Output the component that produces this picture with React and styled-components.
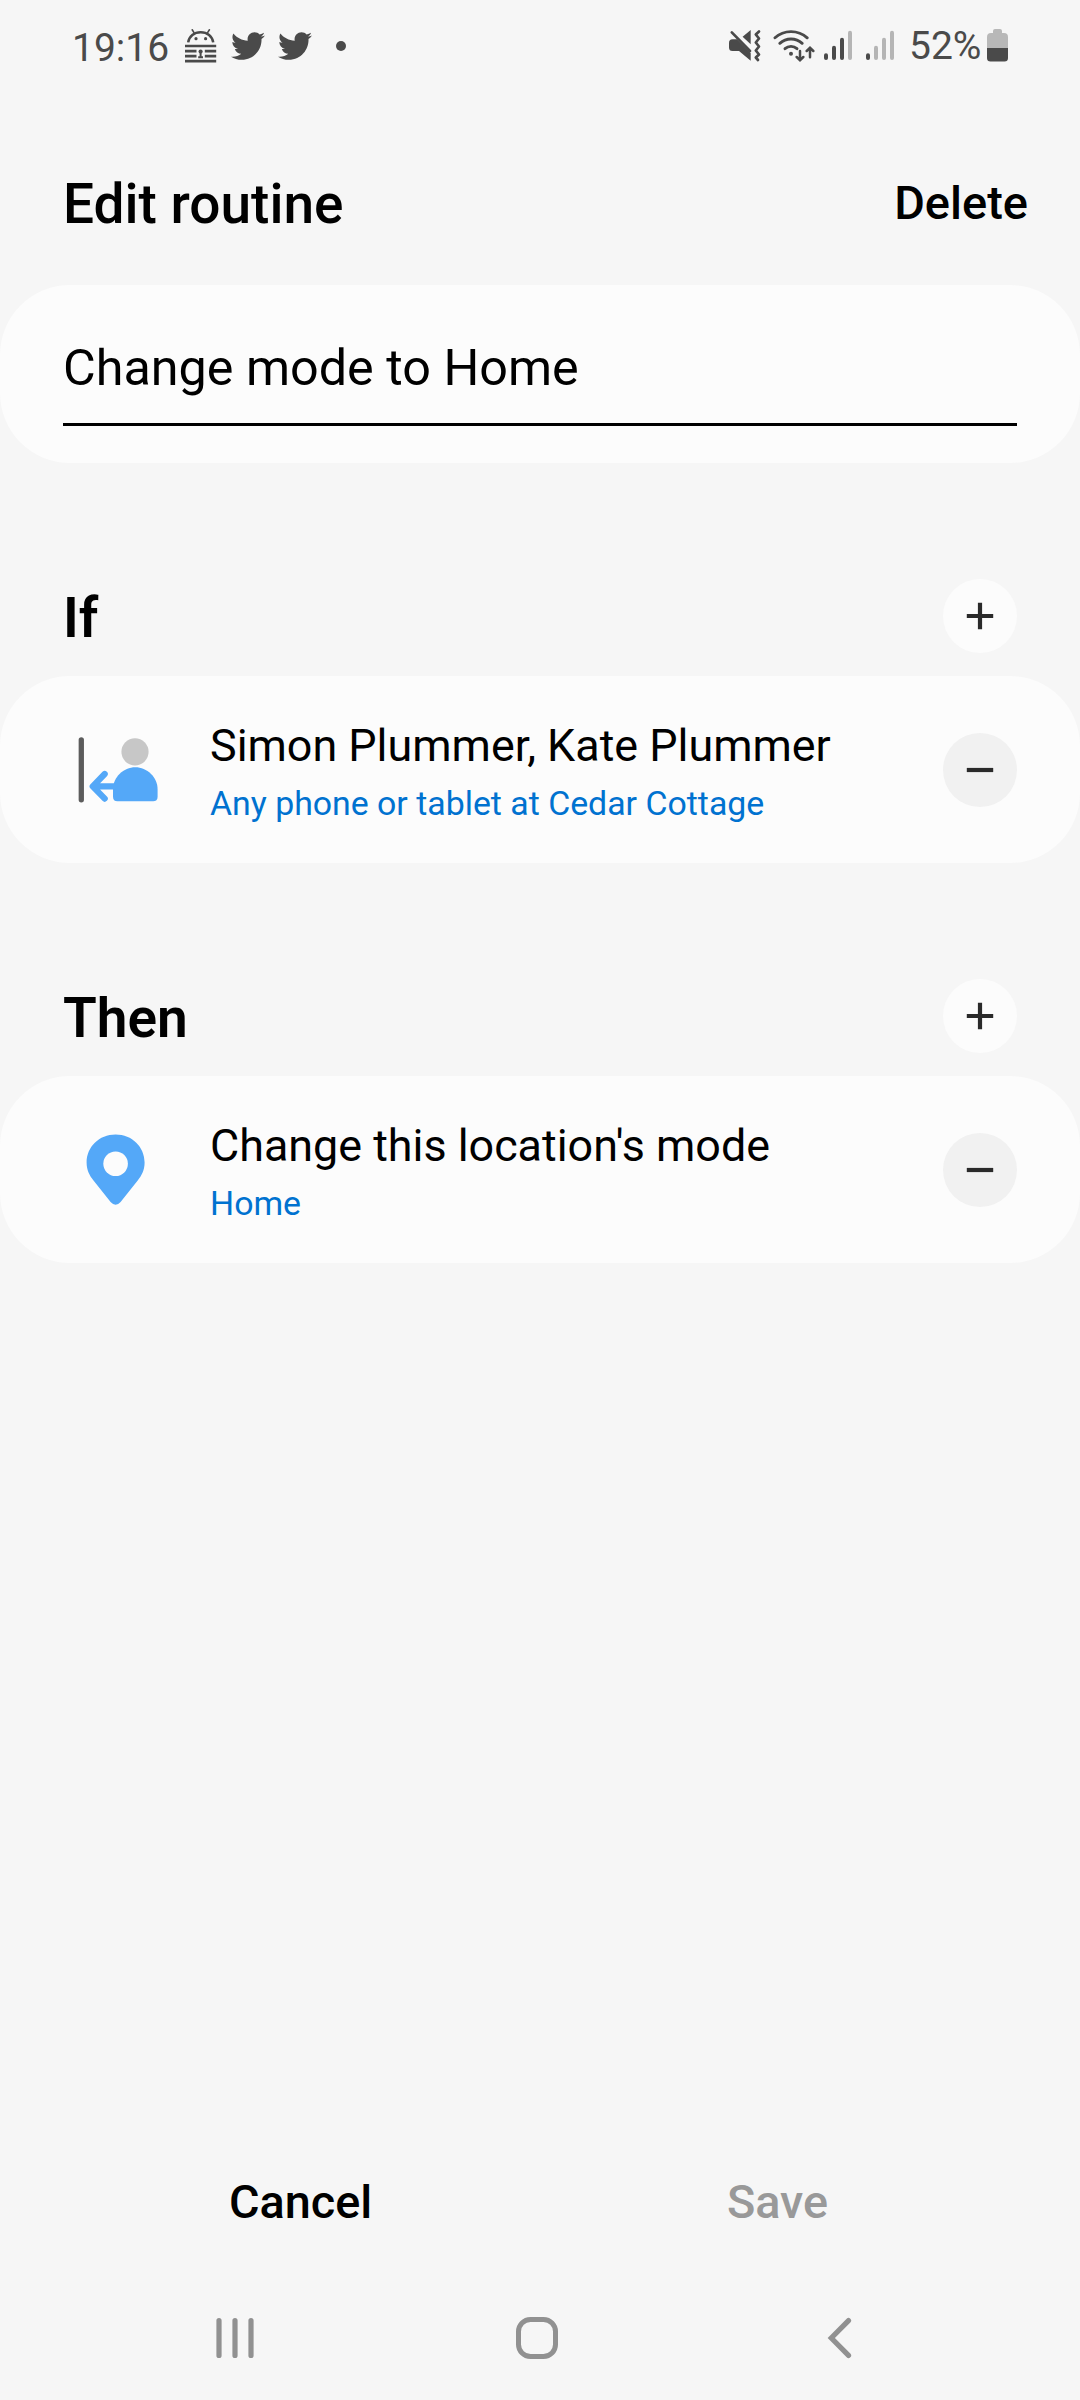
import styled, { createGlobalStyle } from 'styled-components'
import { FaTwitter } from 'react-icons/fa'

const conditions = [
    {
        title: 'Simon Plummer, Kate Plummer',
        sub: 'Any phone or tablet at Cedar Cottage',
        icon: ArriveIcon,
    },
]

const actions = [
    {
        title: "Change this location's mode",
        sub: 'Home',
        icon: PinIcon,
    },
]

function App() {
    return (
        <Screen>
            <GlobalStyle />
            <StatusBar />
            <Header>
                <Title>Edit routine</Title>
                <DeleteButton>Delete</DeleteButton>
            </Header>
            <NameCard>
                <NameField>Change mode to Home</NameField>
            </NameCard>
            <Section title="If" items={conditions} />
            <Section title="Then" items={actions} />
            <Footer>
                <FooterButton>Cancel</FooterButton>
                <FooterButton disabled>Save</FooterButton>
            </Footer>
            <NavBar />
        </Screen>
    )
}

export default App

function Section({ title, items }) {
    return (
        <SectionWrap>
            <SectionHead>
                <SectionTitle>{title}</SectionTitle>
                <RoundButton aria-label="Add">
                    <svg width="28" height="28" viewBox="0 0 28 28">
                        <path d="M.8 14H27.2M14 .8V27.2" stroke="#2a2a2a" strokeWidth="4.2" />
                    </svg>
                </RoundButton>
            </SectionHead>
            {items.map((item) => (
                <Card key={item.title}>
                    <IconBox><item.icon /></IconBox>
                    <CardText>
                        <CardTitle>{item.title}</CardTitle>
                        <CardSub>{item.sub}</CardSub>
                    </CardText>
                    <RoundButton $grey aria-label="Remove">
                        <svg width="28" height="28" viewBox="0 0 28 28">
                            <path d="M.8 14H27.2" stroke="#2a2a2a" strokeWidth="4.2" />
                        </svg>
                    </RoundButton>
                </Card>
            ))}
        </SectionWrap>
    )
}

function StatusBar() {
    return (
        <StatusWrap>
            <Clock>19:16</Clock>
            <LeftIcons>
                <KeepassIcon />
                <FaTwitter size="34" />
                <FaTwitter size="34" />
                <Dot />
            </LeftIcons>
            <RightIcons>
                <MuteIcon />
                <WifiIcon />
                <SignalIcon level={3} />
                <SignalIcon level={1} />
            </RightIcons>
            <Percent>52%</Percent>
            <Battery>
                <BatteryIcon />
            </Battery>
        </StatusWrap>
    )
}

function NavBar() {
    return (
        <NavWrap>
            <svg width="38" height="42" viewBox="0 0 38 42">
                <path d="M3 3.5V38.5M19 3.5V38.5M35 3.5V38.5" stroke="#919191" strokeWidth="5.2" strokeLinecap="round" />
            </svg>
            <svg width="42" height="42" viewBox="0 0 42 42">
                <rect x="2.5" y="2.5" width="37" height="37" rx="12" fill="none" stroke="#919191" strokeWidth="5" />
            </svg>
            <svg width="26" height="42" viewBox="0 0 26 42">
                <path d="M22.5 3.6L5.3 21L22.5 38.4" fill="none" stroke="#919191" strokeWidth="5.2" strokeLinecap="round" />
            </svg>
        </NavWrap>
    )
}

function KeepassIcon() {
    return (
        <svg width="32" height="34" viewBox="0 0 32 34">
            <path d="M3.2 13.4C4 7 9.2 3.2 15.7 3.2S27.4 7 28.2 13.4" fill="none" stroke="#4a4a4a" strokeWidth="2.5" />
            <path d="M9 3.6L7.2 .8M22.6 3.6L24.4 .8" stroke="#4a4a4a" strokeWidth="1.6" strokeLinecap="round" />
            <circle cx="11" cy="9.7" r="1.6" fill="#4a4a4a" />
            <circle cx="20.6" cy="9.7" r="1.6" fill="#4a4a4a" />
            <path d="M0 17H31.2M0 32.2H31.2M0 22.2H11.5M19.8 22.2H31.2M0 27.2H11.5M19.8 27.2H31.2" stroke="#4a4a4a" strokeWidth="2.7" />
            <circle cx="15.6" cy="22.5" r="2.1" fill="#4a4a4a" />
            <path d="M15.6 22V28.4M13.2 28.3H18" stroke="#4a4a4a" strokeWidth="2" />
        </svg>
    )
}

function MuteIcon() {
    return (
        <svg width="36" height="34" viewBox="0 0 36 34">
            <path d="M1 14Q1 10.3 4.5 10.3H9L22.7 24V31.7L11 22H4.5Q1 22 1 18.5Z" fill="#4a4a4a" />
            <path d="M22.7 1V15.3L14.6 7.7Z" fill="#4a4a4a" />
            <path d="M3.8 3.4L22 22" stroke="#4a4a4a" strokeWidth="2.7" strokeLinecap="round" />
            <path d="M31 2.5L27.8 5.5L31 9.5L27.8 13.5L31 17.5L27.8 21.5L31 25.5L27.8 28.5L30 31" fill="none" stroke="#4a4a4a" strokeWidth="2.7" strokeLinejoin="round" strokeLinecap="round" />
        </svg>
    )
}

function WifiIcon() {
    return (
        <svg width="42" height="34" viewBox="0 0 42 34">
            <g fill="none" stroke="#4a4a4a" strokeWidth="2.9" strokeLinecap="round">
                <path d="M2 8.8Q8.7 2.6 18 2.6T34.2 8.8" />
                <path d="M6.8 14.3Q11.6 10 18 10T29.2 14.3" />
                <path d="M12 19.7Q14.6 17.4 18 17.4T24 19.7" />
                <path d="M27 22V31M23.7 28L27 31.3L30.3 28M37 28.2V19M33.7 22L37 18.7L40.3 22" strokeWidth="2.5" />
            </g>
            <circle cx="18" cy="24.8" r="2" fill="#4a4a4a" />
        </svg>
    )
}

function SignalIcon({ level }) {
    const tops = [26.3, 18.7, 10.7, 3.7]
    return (
        <svg width="33" height="34" viewBox="0 0 33 34">
            {tops.map((top, i) => (
                <path key={top} d={`M${2 + i * 8} ${top}V29`} stroke={i < level ? '#4a4a4a' : '#b5b5b5'} strokeWidth="4" strokeLinecap="round" />
            ))}
        </svg>
    )
}

function BatteryIcon() {
    return (
        <svg width="21" height="33" viewBox="0 0 21 33">
            <path d="M0 19V8Q0 4 4 4H6V2Q6 0 8 0H13Q15 0 15 2V4H17Q21 4 21 8V19Z" fill="#b8b8b8" />
            <path d="M0 19H21V29Q21 32.5 17.5 32.5H3.5Q0 32.5 0 29Z" fill="#4a4a4a" />
        </svg>
    )
}

// person walking towards the door line
function ArriveIcon() {
    return (
        <svg width="84" height="70" viewBox="-2 .7 84 70">
            <path d="M5.3 5.5V65.5" stroke="#5c5c5c" strokeWidth="5.3" strokeLinecap="round" />
            <circle cx="59" cy="17.5" r="13.6" fill="#c7c7c7" />
            <path d="M37 55V62.5Q37 67 41.5 67H77Q81.6 67 81.6 62.5V55C81.6 43 71 33 59.3 33S37 43 37 55Z" fill="#54a8f8" />
            <path d="M38 52H17M28.7 39.7L16.7 52L28.7 64.3" fill="none" stroke="#54a8f8" strokeWidth="6.2" strokeLinecap="round" strokeLinejoin="round" />
        </svg>
    )
}

function PinIcon() {
    return (
        <svg width="84" height="72" viewBox="0 0 84 72">
            <path d="M41.6 .5C25 .5 12.6 13 12.6 28.5C12.6 36 15.5 41.5 19.5 46.5L36.6 68Q41.6 73.5 46.6 68L63.7 46.5C67.7 41.5 70.6 36 70.6 28.5C70.6 13 58.2 .5 41.6 .5Z" fill="#54a8f8" />
            <circle cx="41.6" cy="29.7" r="12.3" fill="#fcfcfc" />
        </svg>
    )
}

const GlobalStyle = createGlobalStyle`
    * {
        box-sizing: border-box;
    }
    body {
        margin: 0;
        background: #f6f6f6;
        font-family: Roboto, sans-serif;
        color: #000;
    }
    svg {
        display: block;
        flex: none;
    }
    button {
        border: none;
        padding: 0;
        background: none;
        font-family: inherit;
        color: inherit;
    }
`

const Screen = styled.div`
    width: 1080px;
    height: 2400px;
    display: flex;
    flex-direction: column;
    overflow: hidden;
`

const StatusWrap = styled.div`
    height: 94px;
    padding: 0 72px;
    display: flex;
    align-items: center;
    color: #4a4a4a;
`

const Clock = styled.span`
    width: 113px;
    margin-top: 1px;
    font-size: 39px;
`

const LeftIcons = styled.div`
    display: flex;
    align-items: center;
    gap: 13.5px;
    margin-bottom: 2px;
`

const Dot = styled.i`
    width: 10px;
    height: 10px;
    margin-left: 10.5px;
    border-radius: 50%;
    background: #4a4a4a;
`

const RightIcons = styled.div`
    display: flex;
    align-items: center;
    gap: 9px;
    margin-left: auto;
    margin-bottom: 2px;
`

const Percent = styled.span`
    width: 78px;
    margin: 0 0 3px 10px;
    font-size: 39px;
`

const Battery = styled.div`
    margin-bottom: 3px;
`

const Header = styled.header`
    height: 191px;
    padding: 0 52px 0 63px;
    display: flex;
    align-items: center;
    justify-content: space-between;
`

const Title = styled.h1`
    margin: 28px 0 0;
    font-size: 55px;
    font-weight: 500;
`

const DeleteButton = styled.button`
    margin-top: 26px;
    font-size: 47px;
    font-weight: 500;
`

const NameCard = styled.div`
    height: 178px;
    padding: 48px 63px 0;
    border-radius: 70px;
    background: #fcfcfc;
`

const NameField = styled.div`
    height: 93px;
    border-bottom: 3px solid #000;
    font-size: 50.3px;
    line-height: 70px;
`

const SectionWrap = styled.section`
    padding-top: 116px;
`

const SectionHead = styled.div`
    height: 97px;
    padding: 0 63px;
    display: flex;
    justify-content: space-between;
`

const SectionTitle = styled.h2`
    margin: 0;
    font-size: 55px;
    font-weight: 600;
    line-height: 78px;
`

const RoundButton = styled.button`
    width: 74px;
    height: 74px;
    flex: none;
    display: flex;
    align-items: center;
    justify-content: center;
    border-radius: 50%;
    background: ${props => props.$grey ? '#f1f1f1' : '#fcfcfc'};
`

const Card = styled.div`
    height: 187px;
    padding: 0 63px 0 74px;
    display: flex;
    align-items: center;
    border-radius: 70px;
    background: #fcfcfc;
`

const IconBox = styled.div`
    width: 136px;
`

const CardText = styled.div`
    flex: 1;
    padding-top: 6px;
`

const CardTitle = styled.div`
    font-size: 44.85px;
    line-height: 60px;
`

const CardSub = styled.div`
    margin-top: 2px;
    font-size: 33.85px;
    line-height: 52px;
    color: #0072d0;
`

const Footer = styled.footer`
    margin-top: auto;
    height: 126px;
    padding: 0 64px 18px 62px;
    display: grid;
    grid-template-columns: 1fr 1fr;
`

const FooterButton = styled.button`
    font-size: 46.8px;
    font-weight: 500;
    color: ${props => props.disabled ? '#999' : '#000'};
`

const NavWrap = styled.nav`
    height: 126px;
    padding: 2px 0 0 84px;
    display: grid;
    grid-template-columns: repeat(3, 302px);
    align-items: center;
    justify-items: center;
`
